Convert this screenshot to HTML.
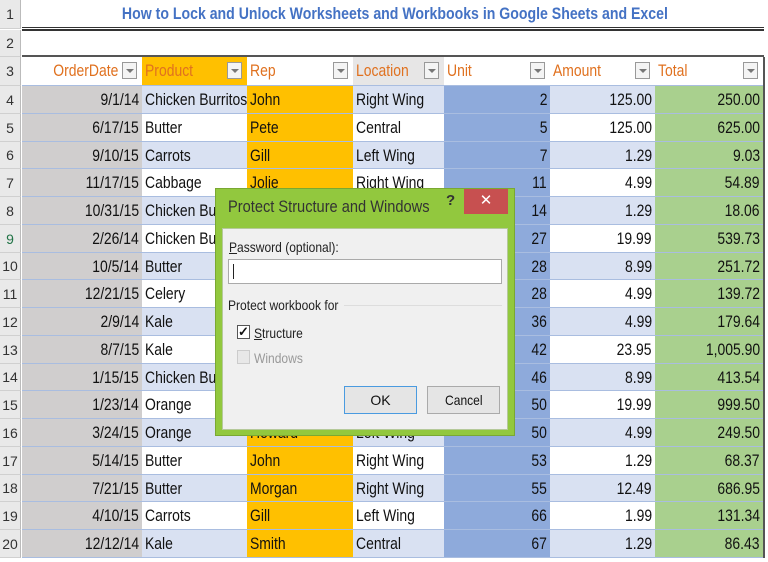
<!DOCTYPE html>
<html><head><meta charset="utf-8"><style>
*{margin:0;padding:0;box-sizing:border-box}
body{width:768px;height:562px;overflow:hidden;background:#fff;font-family:"Liberation Sans",sans-serif;font-size:17px;color:#111;position:relative}
.a{position:absolute;overflow:hidden;white-space:nowrap}
.s{display:inline-block;transform:scaleX(.82);transform-origin:left center}
.r .s{transform-origin:right center}
.rh{left:0;width:21px;background:#e9e9e9;border-right:1px solid #bbb;border-bottom:1px solid #d0d0d0;font-size:14px;color:#333;text-align:center}
.c{height:28px;line-height:28px;padding:0 3px;border-bottom:1px solid #a9bde0}
.r{text-align:right}
.hd{color:#e0711f}
.dd{position:absolute;width:15px;height:17px;border:1px solid #999;background:#f4f4f4;top:5px}
.dd:after{content:"";position:absolute;left:3px;top:6px;border-left:4px solid transparent;border-right:4px solid transparent;border-top:4px solid #777}
.dl{transform:scaleX(.86);transform-origin:left center;display:inline-block}
</style></head><body>
<div class="a" style="left:22px;top:0;width:746px;height:27px;text-align:center;line-height:28px;color:#4472c4;font-weight:bold;font-size:17px"><span style="display:inline-block;transform:scaleX(.83)">How to Lock and Unlock Worksheets and Workbooks in Google Sheets and Excel</span></div>
<div class="a" style="left:22px;top:27px;width:742px;height:4px;border-top:1px solid #333;border-bottom:2px solid #333"></div>
<div class="a" style="left:22px;top:55px;width:742px;height:2px;background:#555"></div>
<div class="a" style="left:22px;top:556px;width:742px;height:2px;background:#555"></div>
<div class="a" style="left:763px;top:57px;width:2px;height:501px;background:#555"></div>
<div id="g"></div>
<!-- dialog -->
<div class="a" style="left:215px;top:188px;width:300px;height:248px;background:#92c83e;border:1px solid #7aa832"></div>
<div class="a" style="left:228px;top:197px;font-size:17px;color:#333"><span class="dl">Protect Structure and Windows</span></div>
<div class="a" style="left:446px;top:192px;font-size:15px;font-weight:bold;color:#333">?</div>
<div class="a" style="left:464px;top:189px;width:44px;height:25px;background:#c75050;color:#fff;text-align:center;line-height:24px;font-size:15px">✕</div>
<div class="a" style="left:222px;top:228px;width:286px;height:202px;background:#f0f0f0;border:1px solid #b5c99a"></div>
<div class="a" style="left:229px;top:239px;font-size:14px;color:#222"><span class="dl"><u>P</u>assword (optional):</span></div>
<div class="a" style="left:228px;top:259px;width:274px;height:25px;background:#fff;border:1px solid #aaa"></div>
<div class="a" style="left:233px;top:264px;width:1px;height:15px;background:#222"></div>
<div class="a" style="left:228px;top:297px;font-size:14px;color:#222"><span class="dl">Protect workbook for</span></div>
<div class="a" style="left:344px;top:305px;width:158px;height:1px;background:#ddd"></div>
<div class="a" style="left:237px;top:325px;width:13px;height:14px;background:#fff;border:1px solid #555;font-size:13px;line-height:12px;text-align:center;font-weight:bold">✓</div>
<div class="a" style="left:254px;top:325px;font-size:14px;color:#222"><span class="dl"><u>S</u>tructure</span></div>
<div class="a" style="left:237px;top:350px;width:13px;height:14px;background:#e8e8e8;border:1px solid #ccc"></div>
<div class="a" style="left:254px;top:350px;font-size:14px;color:#999"><span class="dl">Windows</span></div>
<div class="a" style="left:344px;top:386px;width:73px;height:28px;background:#e5e5e5;border:1px solid #4a9be0;text-align:center;line-height:26px;font-size:14px">OK</div>
<div class="a" style="left:427px;top:386px;width:73px;height:28px;background:#e5e5e5;border:1px solid #aaa;text-align:center;line-height:26px;font-size:14px"><span style="display:inline-block;transform:scaleX(.86)">Cancel</span></div>
<script>
var cols=[[22,120],[142,105],[247,106],[353,91],[444,106],[550,105],[655,108]];
var h='';
var rt=[0,30,57];var rhh=[29,27,29];
for(var i=0;i<3;i++)h+='<div class="a rh" style="top:'+rt[i]+'px;height:'+rhh[i]+'px;line-height:'+rhh[i]+'px">'+(i+1)+'</div>';
var hdr=['OrderDate','Product','Rep','Location','Unit','Amount','Total'];
var hbg=['#fff','#ffc000','#fff','#e7e6e6','#fff','#fff','#fff'];
for(var j=0;j<7;j++){var c=cols[j];h+='<div class="a c hd'+(j==0?' r':'')+'" style="left:'+c[0]+'px;top:57px;width:'+c[1]+'px;height:29px;background:'+hbg[j]+';'+(j==0?'padding-right:24px':'')+'"><span class="s">'+hdr[j]+'</span><span class="dd" style="left:'+(c[1]-20)+'px"></span></div>';}
var d=[["9/1/14","Chicken Burritos","John","Right Wing",2,"125.00","250.00"],["6/17/15","Butter","Pete","Central",5,"125.00","625.00"],["9/10/15","Carrots","Gill","Left Wing",7,"1.29","9.03"],["11/17/15","Cabbage","Jolie","Right Wing",11,"4.99","54.89"],["10/31/15","Chicken Burritos","John","Right Wing",14,"1.29","18.06"],["2/26/14","Chicken Burritos","Pete","Central",27,"19.99","539.73"],["10/5/14","Butter","Gill","Left Wing",28,"8.99","251.72"],["12/21/15","Celery","Jolie","Central",28,"4.99","139.72"],["2/9/14","Kale","John","Right Wing",36,"4.99","179.64"],["8/7/15","Kale","Pete","Central",42,"23.95","1,005.90"],["1/15/15","Chicken Burritos","Gill","Left Wing",46,"8.99","413.54"],["1/23/14","Orange","Jolie","Right Wing",50,"19.99","999.50"],["3/24/15","Orange","Howard","Left Wing",50,"4.99","249.50"],["5/14/15","Butter","John","Right Wing",53,"1.29","68.37"],["7/21/15","Butter","Morgan","Right Wing",55,"12.49","686.95"],["4/10/15","Carrots","Gill","Left Wing",66,"1.99","131.34"],["12/12/14","Kale","Smith","Central",67,"1.29","86.43"]];
for(var i=0;i<17;i++){var t=Math.round(86+i*27.76),t2=Math.round(86+(i+1)*27.76),hh=t2-t;
h+='<div class="a rh" style="top:'+t+'px;height:'+hh+'px;line-height:'+hh+'px;'+(i==5?'color:#217346':'')+'">'+(i+4)+'</div>';
var band=(i%2==0)?'#d9e1f2':'#fff';
var bg=['#d0cece',band,'#ffc000',band,'#8eaadb',band,'#a9d08e'];
for(var j=0;j<7;j++){var c=cols[j];var r=(j==0||j>=4)?' r':'';
h+='<div class="a c'+r+'" style="left:'+c[0]+'px;top:'+t+'px;width:'+c[1]+'px;height:'+hh+'px;line-height:'+hh+'px;background:'+bg[j]+'"><span class="s">'+d[i][j]+'</span></div>';}}
document.getElementById('g').outerHTML=h;
</script>
</body></html>
